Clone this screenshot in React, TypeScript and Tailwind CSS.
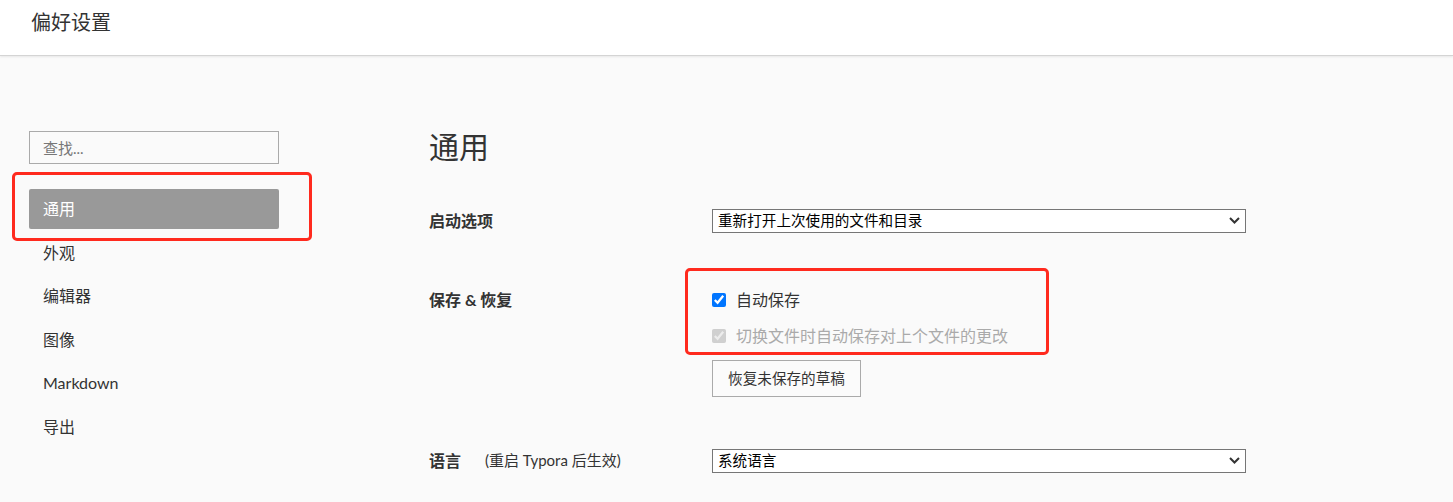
import { useState } from 'react';

const font = { fontFamily: 'Lato, "Noto Sans CJK SC", sans-serif' };

function Chevron() {
  return (
    <svg width="11" height="7" viewBox="0 0 11 7" className="pointer-events-none absolute right-[6px] top-[9px]">
      <path d="M1 1 L5.5 5.5 L10 1" fill="none" stroke="#333" strokeWidth="2" />
    </svg>
  );
}

function Select({ value, options }: { value: string; options: string[] }) {
  return (
    <div className="relative w-[534px]">
      <select
        defaultValue={value}
        className="h-[24px] w-full appearance-none border border-[#767676] bg-white pl-[5px] text-[14.6px] leading-[22px] text-black outline-none"
      >
        {options.map((o) => (
          <option key={o}>{o}</option>
        ))}
      </select>
      <Chevron />
    </div>
  );
}

const navItems = ['通用', '外观', '编辑器', '图像', 'Markdown', '导出'];

export default function App() {
  const [active, setActive] = useState('通用');
  const [autoSave, setAutoSave] = useState(true);

  return (
    <div className="relative min-h-[502px] bg-[#fafafa] text-[#333]" style={font}>
      {/* Header */}
      <div className="h-[56px] border-b border-[#d4d4d4] bg-white pl-[31px] pt-[8px] shadow-[0_1px_2px_rgba(0,0,0,0.08)]">
        <h1 className="text-[20px] leading-[28px] text-[#333]">偏好设置</h1>
      </div>

      <div className="flex">
        {/* Sidebar */}
        <div className="w-[279px] shrink-0 pl-[29px] pt-[75px]">
          <input
            placeholder="查找..."
            className="h-[33px] w-[250px] border border-[#aaa] bg-[#fafafa] px-[13px] text-[15px] text-[#333] outline-none placeholder:text-[#777]"
          />
          <ul className="mt-[25px] flex flex-col gap-[3.5px]">
            {navItems.map((item) => (
              <li
                key={item}
                onClick={() => setActive(item)}
                className={
                  item === active
                    ? 'flex h-[40px] w-[250px] cursor-pointer items-center rounded-[2px] bg-[#999] pl-[14px] text-[16px] text-white'
                    : 'flex h-[40px] w-[250px] cursor-pointer items-center pl-[14px] text-[16px] text-[#333]'
                }
              >
                {item}
              </li>
            ))}
          </ul>
        </div>

        {/* Main */}
        <div className="ml-[150px] pt-[70px]">
          <h2 className="text-[30px] leading-[40px] text-[#333]">通用</h2>

          <div className="mt-[42px] flex items-center">
            <div className="w-[283px] text-[16px] font-bold leading-[20px] text-[#333]">启动选项</div>
            <Select value="重新打开上次使用的文件和目录" options={['重新打开上次使用的文件和目录', '打开新文件', '打开指定目录']} />
          </div>

          <div className="mt-[57px] flex">
            <div className="w-[283px] text-[16px] font-bold leading-[20px] text-[#333]">保存 &amp; 恢复</div>
            <div className="flex flex-col">
              <label className="flex h-[20px] items-center gap-[10px] text-[16px] text-[#333]">
                <input
                  type="checkbox"
                  checked={autoSave}
                  onChange={(e) => setAutoSave(e.target.checked)}
                  className="m-0 h-[14px] w-[14px] accent-[#0075ff]"
                />
                自动保存
              </label>
              <label className="mt-[16px] flex h-[20px] items-center gap-[10px] text-[16px] text-[#aaa]">
                <input type="checkbox" checked disabled readOnly className="m-0 h-[14px] w-[14px]" />
                切换文件时自动保存对上个文件的更改
              </label>
              <button className="mt-[14px] h-[37px] w-[149px] border border-[#aaa] bg-[#fbfbfb] text-[14.6px] text-[#333]">
                恢复未保存的草稿
              </button>
            </div>
          </div>

          <div className="mt-[51px] flex items-center">
            <div className="flex w-[283px] items-center">
              <span className="text-[16px] font-bold leading-[20px] text-[#333]">语言</span>
              <span className="ml-[24px] text-[15px] text-[#333]">(重启 Typora 后生效)</span>
            </div>
            <Select value="系统语言" options={['系统语言', 'English', '简体中文']} />
          </div>
        </div>
      </div>

      {/* Annotation boxes */}
      <div className="pointer-events-none absolute left-[12px] top-[172px] h-[69px] w-[300px] rounded-[5px] border-[3px] border-[#ff2a1e]" />
      <div className="pointer-events-none absolute left-[685px] top-[268px] h-[87px] w-[364px] rounded-[5px] border-[3px] border-[#ff2a1e]" />
    </div>
  );
}
